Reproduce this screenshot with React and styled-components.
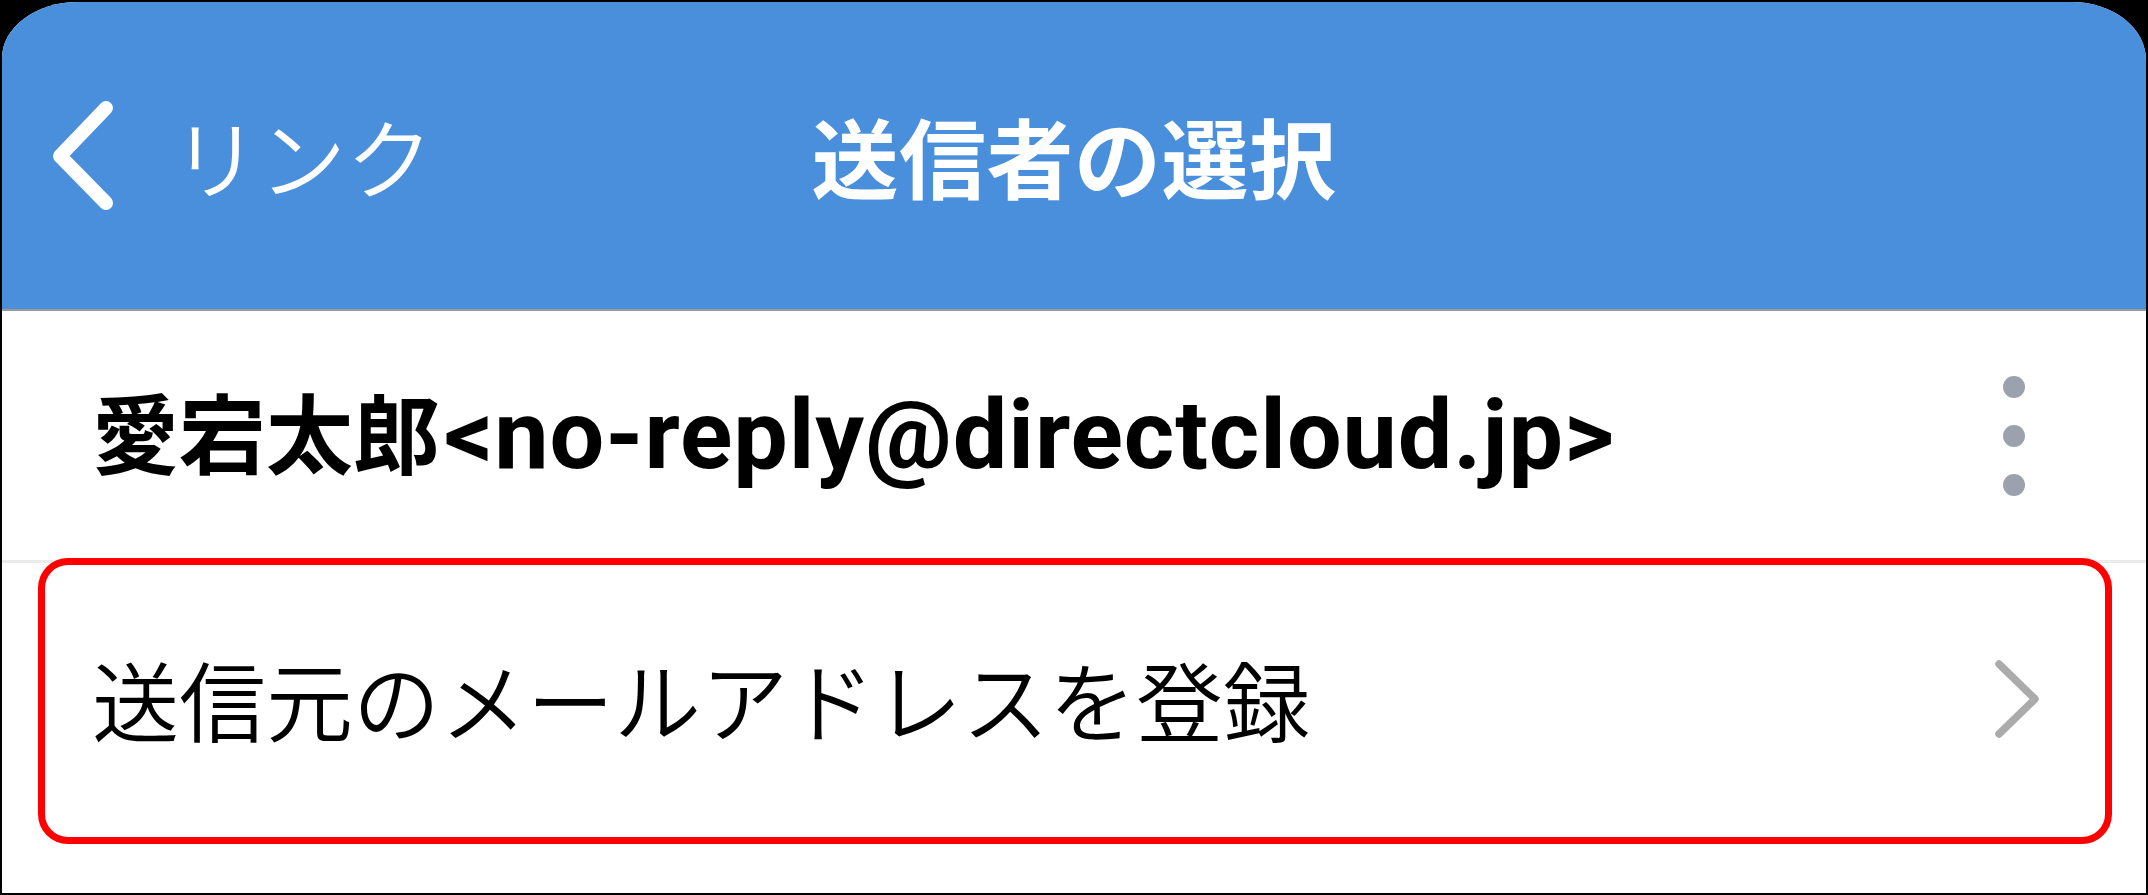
import React from 'react';
import styled, { createGlobalStyle } from 'styled-components';

const GlobalStyle = createGlobalStyle`
  html, body {
    margin: 0;
    padding: 0;
    background: #ffffff;
  }
  body {
    font-family: "Noto Sans CJK JP", "Noto Sans", sans-serif;
  }
`;

const S = {
  Frame: styled.div`
    width: 2148px;
    height: 895px;
    box-sizing: border-box;
    border: 2px solid #000000;
    background: #000000;
    overflow: hidden;
  `,
  Screen: styled.div`
    height: 100%;
    display: flex;
    flex-direction: column;
    background: #ffffff;
    border-radius: 76px 74px 0 0 / 56px 58px 0 0;
    overflow: hidden;
  `,
  NavBar: styled.header`
    flex: none;
    height: 307px;
    display: grid;
    grid-template-columns: 1fr auto 1fr;
    align-items: center;
    background: #4a8fdb;
    border-bottom: 2px solid #9a9a9a;
  `,
  BackButton: styled.div`
    display: flex;
    align-items: center;
    gap: 50px;
    padding-left: 44px;
    color: #ffffff;
    font-size: 87px;
    font-weight: 350;
    line-height: 1;
  `,
  Title: styled.h1`
    margin: 0;
    color: #ffffff;
    font-size: 87px;
    font-weight: 700;
    line-height: 1;
    letter-spacing: 0.5px;
  `,
  Row: styled.div`
    position: relative;
    flex: none;
    height: ${p => p.$height}px;
    display: flex;
    align-items: center;
    padding: 0 ${p => p.$padRight}px 0 90px;
    border-bottom: ${p => (p.$divider ? '3px solid #ebebeb' : 'none')};
  `,
  Label: styled.span`
    color: #000000;
    font-size: 87px;
    font-weight: ${p => (p.$bold ? 700 : 350)};
    line-height: 1;
    white-space: nowrap;
  `,
  Address: styled.span`
    font-family: Roboto, "Liberation Sans", sans-serif;
    font-size: 97px;
    font-weight: 700;
    letter-spacing: 0.9px;
    margin-left: 4px;
  `,
  Kebab: styled.div`
    margin-left: auto;
    display: flex;
    flex-direction: column;
    gap: 27px;
  `,
  Dot: styled.span`
    width: 22px;
    height: 22px;
    border-radius: 50%;
    background: #9ba1ad;
  `,
  Disclosure: styled.svg`
    margin-left: auto;
    flex: none;
  `,
  Highlight: styled.div`
    position: absolute;
    top: -5px;
    left: 36px;
    right: 34px;
    height: 286px;
    box-sizing: border-box;
    border: 7px solid #ff0000;
    border-radius: 30px;
    pointer-events: none;
  `,
};

const BackChevron = () => (
  <svg width="76" height="118" viewBox="0 0 76 118" fill="none">
    <path
      d="M60 11 L14 59 L60 106"
      stroke="#ffffff"
      strokeWidth="14"
      strokeLinecap="round"
      strokeLinejoin="round"
    />
  </svg>
);

const App = () => (
  <>
    <GlobalStyle />
    <S.Frame>
      <S.Screen>
        <S.NavBar>
          <S.BackButton>
            <BackChevron />
            <span>リンク</span>
          </S.BackButton>
          <S.Title>送信者の選択</S.Title>
          <div />
        </S.NavBar>

        <S.Row $height={249} $padRight={121} $divider>
          <S.Label $bold>
            愛宕太郎<S.Address>&lt;no-reply@directcloud.jp&gt;</S.Address>
          </S.Label>
          <S.Kebab>
            <S.Dot />
            <S.Dot />
            <S.Dot />
          </S.Kebab>
        </S.Row>

        <S.Row $height={271} $padRight={103}>
          <S.Label>送信元のメールアドレスを登録</S.Label>
          <S.Disclosure width="52" height="90" viewBox="0 0 52 90" fill="none">
            <path
              d="M8 10 L44 45 L8 80"
              stroke="#ababab"
              strokeWidth="7.5"
              strokeLinecap="round"
              strokeLinejoin="round"
            />
          </S.Disclosure>
          <S.Highlight />
        </S.Row>
      </S.Screen>
    </S.Frame>
  </>
);

export default App;
